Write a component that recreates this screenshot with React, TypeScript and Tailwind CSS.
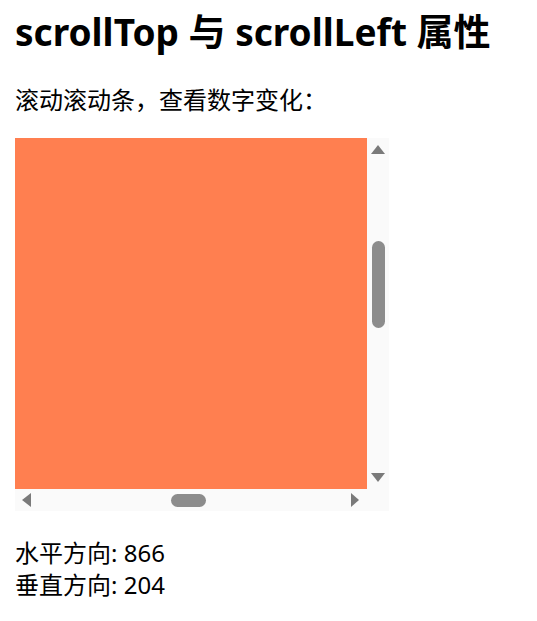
const font = { fontFamily: '"Noto Sans", "Noto Sans CJK SC", sans-serif' };

function Arrow({ dir }: { dir: "up" | "down" | "left" | "right" }) {
  const horizontal = dir === "left" || dir === "right";
  const points = {
    up: "0,9 7,0 14,9",
    down: "0,0 14,0 7,9",
    left: "9,0 9,14 0,7",
    right: "0,0 0,14 8,7",
  }[dir];
  return (
    <svg
      width={horizontal ? 9 : 14}
      height={horizontal ? 14 : 9}
      viewBox={horizontal ? "0 0 9 14" : "0 0 14 9"}
      className="block shrink-0"
    >
      <polygon points={points} fill="#7a7a7a" />
    </svg>
  );
}

export default function App() {
  return (
    <div className="min-h-screen bg-white px-[15px] text-black" style={font}>
      <h1 className="pt-[8px] text-[37px] font-bold leading-[48px]">
        scrollTop 与 scrollLeft 属性
      </h1>
      <p className="mt-[28px] text-[24px] leading-[32px]">
        滚动滚动条，查看数字变化：
      </p>

      <div className="mt-[22px] grid w-[374px] grid-cols-[352px_22px] grid-rows-[351px_22px]">
        <div className="bg-[#ff7f50]" />

        <div className="flex flex-col items-center bg-[#fafafa]">
          <div className="mt-[7px]">
            <Arrow dir="up" />
          </div>
          <div className="mt-[87px] h-[87px] w-[13px] rounded-full bg-[#8c8c8c]" />
          <div className="mb-[7px] mt-auto">
            <Arrow dir="down" />
          </div>
        </div>

        <div className="flex items-center bg-[#fafafa] px-[7px]">
          <Arrow dir="left" />
          <div className="ml-[140px] h-[13px] w-[35px] rounded-full bg-[#8c8c8c]" />
          <div className="ml-auto">
            <Arrow dir="right" />
          </div>
        </div>

        <div className="bg-[#fafafa]" />
      </div>

      <div className="mt-[26px] text-[24px] leading-[32px]">
        <div>水平方向: 866</div>
        <div>垂直方向: 204</div>
      </div>
    </div>
  );
}
